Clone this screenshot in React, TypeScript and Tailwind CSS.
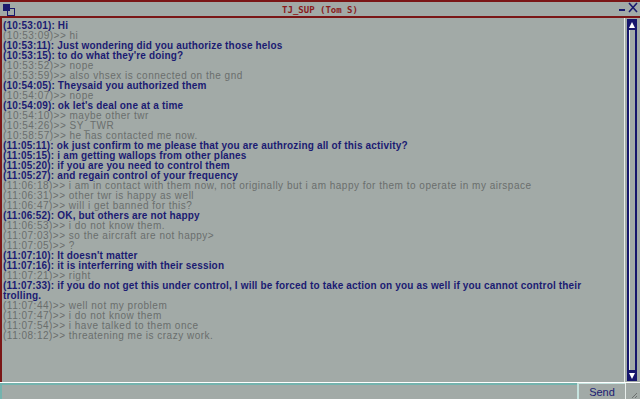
import React from "react";

type Line = { t: string; me: boolean; wrap?: string };

const lines: Line[] = [
  { t: "(10:53:01): Hi", me: true },
  { t: "(10:53:09)>> hi", me: false },
  { t: "(10:53:11): Just wondering did you authorize those helos", me: true },
  { t: "(10:53:15): to do what they're doing?", me: true },
  { t: "(10:53:52)>> nope", me: false },
  { t: "(10:53:59)>> also vhsex is connected on the gnd", me: false },
  { t: "(10:54:05): Theysaid you authorized them", me: true },
  { t: "(10:54:07)>> nope", me: false },
  { t: "(10:54:09): ok let's deal one at a time", me: true },
  { t: "(10:54:10)>> maybe other twr", me: false },
  { t: "(10:54:26)>> SY_TWR", me: false },
  { t: "(10:58:57)>> he has contacted me now.", me: false },
  { t: "(11:05:11): ok just confirm to me please that you are authrozing all of this activity?", me: true },
  { t: "(11:05:15): i am getting wallops from other planes", me: true },
  { t: "(11:05:20): if you are you need to control them", me: true },
  { t: "(11:05:27): and regain control of your frequency", me: true },
  { t: "(11:06:18)>> i am in contact with them now, not originally but i am happy for them to operate in my airspace", me: false },
  { t: "(11:06:31)>> other twr is happy as well", me: false },
  { t: "(11:06:47)>> will i get banned for this?", me: false },
  { t: "(11:06:52): OK, but others are not happy", me: true },
  { t: "(11:06:53)>> i do not know them.", me: false },
  { t: "(11:07:03)>> so the aircraft are not happy>", me: false },
  { t: "(11:07:05)>> ?", me: false },
  { t: "(11:07:10): It doesn't matter", me: true },
  { t: "(11:07:16): it is interferring with their session", me: true },
  { t: "(11:07:21)>> right", me: false },
  {
    t: "(11:07:33): if you do not get this under control, I will be forced to take action on you as well if you cannot control their",
    me: true,
    wrap: "trolling.",
  },
  { t: "(11:07:44)>> well not my problem", me: false },
  { t: "(11:07:47)>> i do not know them", me: false },
  { t: "(11:07:54)>> i have talked to them once", me: false },
  { t: "(11:08:12)>> threatening me is crazy work.", me: false },
];

function WinIcon() {
  return (
    <svg width="14" height="14" viewBox="0 0 14 14" className="block">
      <rect x="5.5" y="5.5" width="7" height="7" fill="none" stroke="#1b1b6e" strokeWidth="1" />
      <rect x="1" y="1" width="7" height="7" fill="#1b1b6e" />
    </svg>
  );
}

function Triangle({ up }: { up: boolean }) {
  return (
    <svg width="8" height="8" viewBox="0 0 8 8" className="block">
      <polygon points={up ? "4,1 7,7 1,7" : "1,1 7,1 4,7"} fill="#ffffff" />
    </svg>
  );
}

export default function App() {
  return (
    <div className="flex h-[399px] w-[640px] flex-col overflow-hidden bg-[#a2aaa7]" style={{ fontFamily: "'Liberation Sans', Arial, sans-serif" }}>
      {/* title bar */}
      <div className="relative flex h-[18px] items-center border-t-2 border-b-2 border-[#7a1616] pt-[1px]">
        <div className="absolute left-[2px] top-[1px]">
          <WinIcon />
        </div>
        <div className="flex-1 text-center text-[9px] font-bold leading-[14px] text-[#8a1c1c]" style={{ fontFamily: "'DejaVu Sans Mono', monospace" }}>
          TJ_SUP (Tom S)
        </div>
        <div className="absolute right-[2px] top-0 flex items-end gap-[3px]">
          <div className="mb-[2px] h-[2px] w-[6px] bg-[#1b1b6e]" />
          <svg width="10" height="11" viewBox="0 0 10 11" className="block">
            <path d="M1 1 L9 10 M9 1 L1 10" stroke="#1b1b6e" strokeWidth="1.6" />
          </svg>
        </div>
      </div>

      {/* chat area */}
      <div className="flex flex-1 border-l-2 border-[#7a1616]">
        <div className="flex-1 border-r border-[#e8eeec] pl-[1px] pt-[3px]">
          {lines.map((l, i) => (
            <div
              key={i}
              className={
                "whitespace-pre text-[10px] leading-[10px] " +
                (l.me ? "font-bold tracking-[0.17px] text-[#1b1b72]" : "tracking-[0.5px] text-[#6a6e6d]")
              }
            >
              {l.t}
              {l.wrap && (
                <>
                  <br />
                  {l.wrap}
                </>
              )}
            </div>
          ))}
        </div>
        {/* scrollbar */}
        <div className="ml-[2px] mr-[3px] mt-[1px] mb-[1px] flex w-[10px] flex-col">
          <div className="flex h-[11px] items-center justify-center bg-[#15156c]">
            <Triangle up />
          </div>
          <div className="flex-1 border-x-2 border-[#15156c] bg-[#a2aaa7]">
            <div className="ml-0 h-full w-[1px] bg-[#e8eeec]" />
          </div>
          <div className="flex h-[11px] items-center justify-center bg-[#15156c]">
            <Triangle up={false} />
          </div>
        </div>
      </div>

      {/* input row */}
      <div className="flex h-[17px] border-t border-white">
        <div className="flex-1 border-t-2 border-l-2 border-[#74b3ae]" />
        <div className="flex w-[48px] items-center justify-center border-l-2 border-t border-[#c6e3df] text-[11px] leading-[14px] text-[#1b1b72]">
          Send
        </div>
        <div className="relative w-[15px] border-l border-[#e8eeec]">
          <svg width="8" height="8" viewBox="0 0 8 8" className="absolute bottom-0 right-[2px]">
            <path d="M7 2 L2 7 M7 5 L5 7" stroke="#6d7170" strokeWidth="1" />
          </svg>
        </div>
      </div>
    </div>
  );
}
